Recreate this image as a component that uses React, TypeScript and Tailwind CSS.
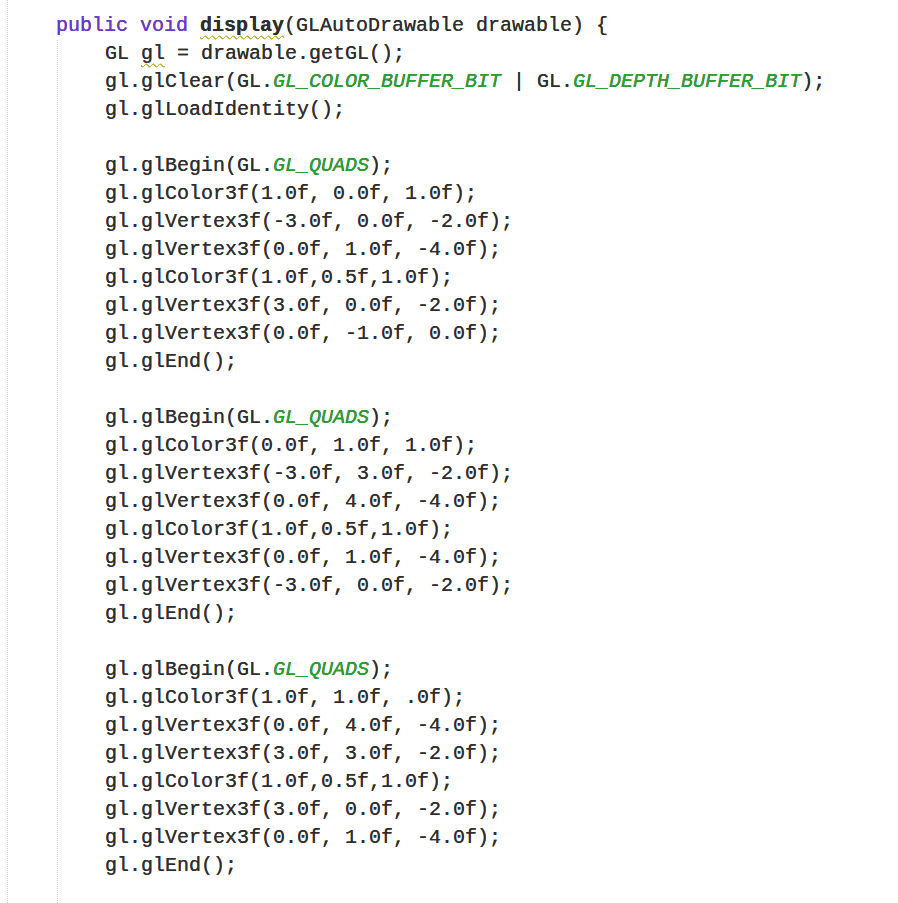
import React from "react";

type Tok = { t: string; c?: "kw" | "const" | "bold" | "warn" };

const blocks: string[][] = [
  [
    "gl.glColor3f(1.0f, 0.0f, 1.0f);",
    "gl.glVertex3f(-3.0f, 0.0f, -2.0f);",
    "gl.glVertex3f(0.0f, 1.0f, -4.0f);",
    "gl.glColor3f(1.0f,0.5f,1.0f);",
    "gl.glVertex3f(3.0f, 0.0f, -2.0f);",
    "gl.glVertex3f(0.0f, -1.0f, 0.0f);",
  ],
  [
    "gl.glColor3f(0.0f, 1.0f, 1.0f);",
    "gl.glVertex3f(-3.0f, 3.0f, -2.0f);",
    "gl.glVertex3f(0.0f, 4.0f, -4.0f);",
    "gl.glColor3f(1.0f,0.5f,1.0f);",
    "gl.glVertex3f(0.0f, 1.0f, -4.0f);",
    "gl.glVertex3f(-3.0f, 0.0f, -2.0f);",
  ],
  [
    "gl.glColor3f(1.0f, 1.0f, .0f);",
    "gl.glVertex3f(0.0f, 4.0f, -4.0f);",
    "gl.glVertex3f(3.0f, 3.0f, -2.0f);",
    "gl.glColor3f(1.0f,0.5f,1.0f);",
    "gl.glVertex3f(3.0f, 0.0f, -2.0f);",
    "gl.glVertex3f(0.0f, 1.0f, -4.0f);",
  ],
];

function Token({ tok }: { tok: Tok }) {
  if (tok.c === "kw") return <span className="text-[#6f35d8]">{tok.t}</span>;
  if (tok.c === "const") return <span className="italic text-[#22a52c]">{tok.t}</span>;
  if (tok.c === "bold")
    return (
      <span className="font-bold underline decoration-wavy decoration-[#e8cf2a] decoration-1 underline-offset-4">
        {tok.t}
      </span>
    );
  if (tok.c === "warn")
    return (
      <span className="underline decoration-wavy decoration-[#e8cf2a] decoration-1 underline-offset-4">
        {tok.t}
      </span>
    );
  return <span>{tok.t}</span>;
}

function Line({ toks }: { toks: Tok[] }) {
  return (
    <div className="h-[28px] whitespace-pre">
      {toks.map((tok, i) => (
        <Token key={i} tok={tok} />
      ))}
    </div>
  );
}

const quads: Tok[] = [{ t: "gl.glBegin(GL." }, { t: "GL_QUADS", c: "const" }, { t: ");" }];

export default function App() {
  return (
    <div className="min-h-[903px] w-[898px] bg-white">
      <div className="ml-[7px] min-h-[903px] border-l border-dotted border-[#d4d4d4] pt-[12px] pl-[48px] font-[family-name:'Liberation_Mono','Courier_New',monospace] text-[20px] leading-[28px] text-[#2e2e2e] [text-shadow:0_0_0.5px_#2e2e2e]">
        <Line
          toks={[
            { t: "public void", c: "kw" },
            { t: " " },
            { t: "display", c: "bold" },
            { t: "(GLAutoDrawable drawable) {" },
          ]}
        />
        <div className="ml-[1px] min-h-[863px] border-l border-dotted border-[#d4d4d4] pl-[47px]">
          <Line toks={[{ t: "GL " }, { t: "gl", c: "warn" }, { t: " = drawable.getGL();" }]} />
          <Line
            toks={[
              { t: "gl.glClear(GL." },
              { t: "GL_COLOR_BUFFER_BIT", c: "const" },
              { t: " | GL." },
              { t: "GL_DEPTH_BUFFER_BIT", c: "const" },
              { t: ");" },
            ]}
          />
          <Line toks={[{ t: "gl.glLoadIdentity();" }]} />
          {blocks.map((rows, b) => (
            <div key={b}>
              <div className="h-[28px]" />
              <Line toks={quads} />
              {rows.map((r, i) => (
                <Line key={i} toks={[{ t: r }]} />
              ))}
              <Line toks={[{ t: "gl.glEnd();" }]} />
            </div>
          ))}
        </div>
      </div>
    </div>
  );
}
